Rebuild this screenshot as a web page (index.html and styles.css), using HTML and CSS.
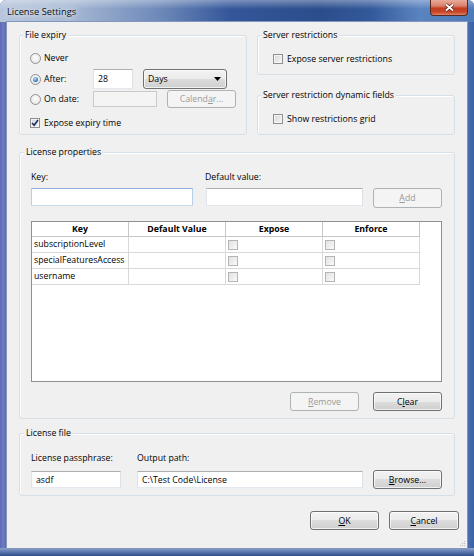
FILE: index.html
```html
<!DOCTYPE html>
<html lang="en">
<head>
    <meta charset="UTF-8">
    <meta name="viewport" content="width=device-width, initial-scale=1.0">
    <title>License Settings</title>
    <link rel="stylesheet" href="styles.css">
</head>
<body>
    <div class="window">

        <div class="titlebar">
            <span class="title">License Settings</span>
            <button class="close" type="button">
                <svg width="11" height="9" viewBox="0 0 11 9">
                    <path d="M2 1.5 L9 7.5 M9 1.5 L2 7.5" stroke="#5b1e14" stroke-width="3.4"/>
                    <path d="M2 1.5 L9 7.5 M9 1.5 L2 7.5" stroke="#fff" stroke-width="1.8"/>
                </svg>
            </button>
        </div>

        <div class="client">

            <div class="top-row">
                <div class="group expiry">
                    <div class="caption">File expiry</div>
                    <div class="opt opt-never"><span class="radio"></span><span>Never</span></div>
                    <div class="opt opt-after">
                        <span class="radio on"></span><span class="opt-label">After:</span>
                        <input class="field num" type="text" value="28">
                        <div class="combo">Days
                            <svg width="7" height="4" viewBox="0 0 7 4"><polygon points="0,0 7,0 3.5,4" fill="#000"/></svg>
                        </div>
                    </div>
                    <div class="opt opt-date">
                        <span class="radio"></span><span class="opt-label">On date:</span>
                        <input class="field date" type="text" disabled>
                        <button class="btn calendar" disabled>Calend<u>a</u>r...</button>
                    </div>
                    <div class="opt opt-expose">
                        <span class="check">
                            <svg width="8" height="8" viewBox="0 0 8 8"><path d="M1 4 L3.2 6.3 L7 1" fill="none" stroke="#1d2d5c" stroke-width="1.6"/></svg>
                        </span>
                        <span>Expose expiry time</span>
                    </div>
                </div>

                <div class="side">
                    <div class="group">
                        <div class="caption">Server restrictions</div>
                        <div class="opt opt-side"><span class="check"></span><span>Expose server restrictions</span></div>
                    </div>
                    <div class="group">
                        <div class="caption">Server restriction dynamic fields</div>
                        <div class="opt opt-side"><span class="check"></span><span>Show restrictions grid</span></div>
                    </div>
                </div>
            </div>

            <div class="group props">
                <div class="caption">License properties</div>
                <div class="labels">
                    <span class="lbl-key">Key:</span>
                    <span>Default value:</span>
                </div>
                <div class="fields">
                    <input class="field key" type="text">
                    <input class="field defval" type="text">
                    <button class="btn add" disabled><u>A</u>dd</button>
                </div>
                <div class="grid">
                    <table>
                        <colgroup><col><col><col><col></colgroup>
                        <tr><th>Key</th><th>Default Value</th><th>Expose</th><th>Enforce</th></tr>
                        <tr><td>subscriptionLevel</td><td></td><td><span class="cell-check"></span></td><td><span class="cell-check"></span></td></tr>
                        <tr><td>specialFeaturesAccess</td><td></td><td><span class="cell-check"></span></td><td><span class="cell-check"></span></td></tr>
                        <tr><td>username</td><td></td><td><span class="cell-check"></span></td><td><span class="cell-check"></span></td></tr>
                    </table>
                </div>
                <div class="actions">
                    <button class="btn" disabled><u>R</u>emove</button>
                    <button class="btn">C<u>l</u>ear</button>
                </div>
            </div>

            <div class="group licfile">
                <div class="caption">License file</div>
                <div class="labels">
                    <span class="lbl-pass">License passphrase:</span>
                    <span>Output path:</span>
                </div>
                <div class="fields">
                    <input class="field pass" type="text" value="asdf">
                    <input class="field outpath" type="text" value="C:\Test Code\License">
                    <button class="btn browse"><u>B</u>rowse...</button>
                </div>
            </div>

            <div class="footer">
                <button class="btn"><u>O</u>K</button>
                <button class="btn cancel"><u>C</u>ancel</button>
            </div>

            <svg class="grip" width="7" height="7" viewBox="0 0 7 7">
                <rect x="5" y="1" width="1" height="1" fill="#b9b9b9"/>
                <rect x="3" y="3" width="1" height="1" fill="#b9b9b9"/>
                <rect x="5" y="3" width="1" height="1" fill="#b9b9b9"/>
                <rect x="1" y="5" width="1" height="1" fill="#b9b9b9"/>
                <rect x="3" y="5" width="1" height="1" fill="#b9b9b9"/>
                <rect x="5" y="5" width="1" height="1" fill="#b9b9b9"/>
            </svg>
        </div>
    </div>
</body>
</html>
```

FILE: styles.css
```css
*{
    box-sizing: border-box;
}
body{
    margin: 0;
    background: #fff;
    font-family: "Open Sans", sans-serif;
    font-size: 8.75px;
    color: #000;
}
.window{
    width: 474px;
    height: 556px;
    display: flex;
    flex-direction: column;
    padding: 0 7px 8px;
    border-radius: 6px 6px 0 0;
    background:
        linear-gradient(#8aa2cf, #2c4b8b) bottom / 100% 8px no-repeat,
        linear-gradient(90deg, #5d68b2, #6f7cc0 3px, #5567ad 7px, #3f63a7 50%, #4a71b2 calc(100% - 7px), #3a5fa3);
}
.titlebar{
    height: 22px;
    margin: 0 -7px;
    padding-left: 7px;
    display: flex;
    align-items: flex-start;
    border-radius: 6px 6px 0 0;
    background:
        linear-gradient(rgba(255,255,255,.35), rgba(255,255,255,0) 9px),
        linear-gradient(90deg, #b7c6dc 0, #a6b8d4 70px, #6d89b9 160px, #34579a 230px, #2b4d8c 320px, #33599a 370px, #5a84c0 420px, #4f7ab8 474px);
}
.title{
    margin-top: 5px;
    font-size: 9.3px;
    line-height: 13px;
    color: #111;
    text-shadow: 0 0 5px #fff, 0 0 9px rgba(255,255,255,.8);
}
.close{
    margin-left: auto;
    margin-right: 6px;
    width: 38px;
    height: 16px;
    padding: 0;
    display: flex;
    align-items: center;
    justify-content: center;
    border: 1px solid #5a2a20;
    border-top: none;
    border-radius: 0 0 4px 4px;
    background: linear-gradient(#e9ab9b, #d9806a 40%, #c23c20 55%, #c9462a 80%, #de8366);
}
.client{
    flex: 1;
    position: relative;
    padding: 13px 12px 0;
    background: #f0f0f0;
    box-shadow: 0 0 0 1px #8396bb;
}

/* group boxes */
.group{
    border: 1px solid #d5dfe5;
    border-radius: 3px;
    box-shadow: inset 1px 1px 0 #fff;
}
.caption{
    width: fit-content;
    height: 13px;
    line-height: 13px;
    margin: -7px 0 0 3px;
    padding: 0 2px;
    background: #f0f0f0;
}
.top-row{
    display: flex;
    gap: 10px;
    height: 100px;
}
.expiry{
    width: 228px;
}
.side{
    width: 198px;
    display: flex;
    flex-direction: column;
    gap: 20px;
}
.side .group{
    height: 40px;
}

/* option rows */
.opt{
    display: flex;
    align-items: center;
    padding-left: 10px;
}
.opt-never{
    margin-top: 8px;
    height: 16px;
}
.opt-after{
    margin-top: 2px;
    height: 22px;
}
.opt-date{
    height: 18px;
}
.opt-expose{
    margin-top: 8px;
    height: 14px;
}
.opt-side{
    margin-top: 10px;
    height: 14px;
    padding-left: 15px;
}
.opt-label{
    width: 49px;
}
.radio{
    flex: none;
    width: 11px;
    height: 11px;
    margin-right: 3px;
    display: flex;
    align-items: center;
    justify-content: center;
    border: 1px solid #929292;
    border-radius: 50%;
    background: radial-gradient(circle at 50% 40%, #fff, #dedede);
}
.radio.on::after{
    content: "";
    width: 5px;
    height: 5px;
    border-radius: 50%;
    background: radial-gradient(circle at 40% 35%, #c4e4fb, #3f7ec3 60%, #1d4d88);
}
.check{
    flex: none;
    width: 10px;
    height: 10px;
    margin-right: 4px;
    display: flex;
    align-items: center;
    justify-content: center;
    border: 1px solid #8f8f8f;
    background: linear-gradient(135deg, #d3d5d8, #f8f8f8);
    box-shadow: inset 0 0 0 1px #f4f4f4;
}

/* inputs and buttons */
.field{
    height: 20px;
    padding: 0 4px;
    font: inherit;
    color: #000;
    background: #fff;
    border: 1px solid;
    border-color: #abadb3 #dbdfe6 #e3e9ef #e2e3ea;
    outline: none;
}
.num{
    width: 40px;
}
.date{
    width: 64px;
    height: 16px;
    background: #f4f4f4;
    border-color: #c9c9c9;
}
.combo{
    width: 84px;
    height: 20px;
    margin-left: 10px;
    padding: 0 5px 0 4px;
    display: flex;
    align-items: center;
    justify-content: space-between;
    border: 1px solid #707070;
    border-radius: 3px;
    background: linear-gradient(#f2f2f2, #ebebeb 50%, #dddddd 50%, #cfcfcf);
    box-shadow: inset 0 0 0 1px rgba(255,255,255,.7);
}
.btn{
    width: 69px;
    height: 19px;
    padding: 0;
    font: inherit;
    color: #000;
    border: 1px solid #707070;
    border-radius: 3px;
    background: linear-gradient(#f2f2f2, #ebebeb 50%, #dddddd 50%, #cfcfcf);
    box-shadow: inset 0 0 0 1px rgba(255,255,255,.7);
}
.btn:disabled{
    color: #9a9a9a;
    border-color: #adb2b5;
    background: #f4f4f4;
    box-shadow: none;
}
.calendar{
    height: 18px;
    margin-left: 10px;
}

/* license properties */
.props{
    height: 267px;
    margin-top: 17px;
    padding: 0 12px 0 11px;
}
.props .caption,
.licfile .caption{
    margin-left: -7px;
}
.labels{
    display: flex;
    height: 13px;
    line-height: 13px;
    margin-top: 12px;
}
.lbl-key{
    width: 174px;
}
.fields{
    display: flex;
    align-items: flex-start;
    height: 20px;
    margin-top: 4px;
}
.key{
    width: 162px;
    height: 18px;
    border-color: #8fb0d6 #b9cfe8 #c9dbee #b9cfe8;
}
.defval{
    width: 157px;
    height: 18px;
    margin-left: 13px;
}
.add{
    height: 20px;
    margin-left: 10px;
}
.grid{
    height: 161px;
    margin-top: 13px;
    border: 1px solid #8e8f8f;
    background: #fff;
}
.grid table{
    width: 388px;
    table-layout: fixed;
    border-spacing: 0;
}
.grid col{
    width: 97px;
}
.grid th{
    padding: 0;
    line-height: 14px;
    font-weight: bold;
    text-align: center;
    border-right: 1px solid #c6c6c6;
    border-bottom: 1px solid #c6c6c6;
}
.grid td{
    padding: 0 2px;
    line-height: 15px;
    white-space: nowrap;
    overflow: hidden;
    border-right: 1px solid #d9d9d9;
    border-bottom: 1px solid #d9d9d9;
}
.cell-check{
    display: inline-block;
    width: 10px;
    height: 10px;
    vertical-align: middle;
    border: 1px solid #b5b5b5;
    background: linear-gradient(135deg, #e2e2e2, #fafafa);
}
.actions{
    display: flex;
    justify-content: flex-end;
    gap: 14px;
    margin-top: 10px;
}

/* license file */
.licfile{
    height: 63px;
    margin-top: 14px;
    padding: 0 12px 0 11px;
}
.licfile .fields{
    align-items: center;
    height: 19px;
    margin-top: 5px;
}
.lbl-pass{
    width: 106px;
}
.pass{
    width: 90px;
    height: 17px;
}
.outpath{
    width: 226px;
    height: 17px;
    margin-left: 16px;
}
.browse{
    margin-left: 10px;
}

.footer{
    display: flex;
    justify-content: flex-end;
    gap: 10px;
    margin: 15px -4px 0 0;
}
.cancel{
    width: 70px;
}
.grip{
    position: absolute;
    right: 1px;
    bottom: 1px;
}
```
